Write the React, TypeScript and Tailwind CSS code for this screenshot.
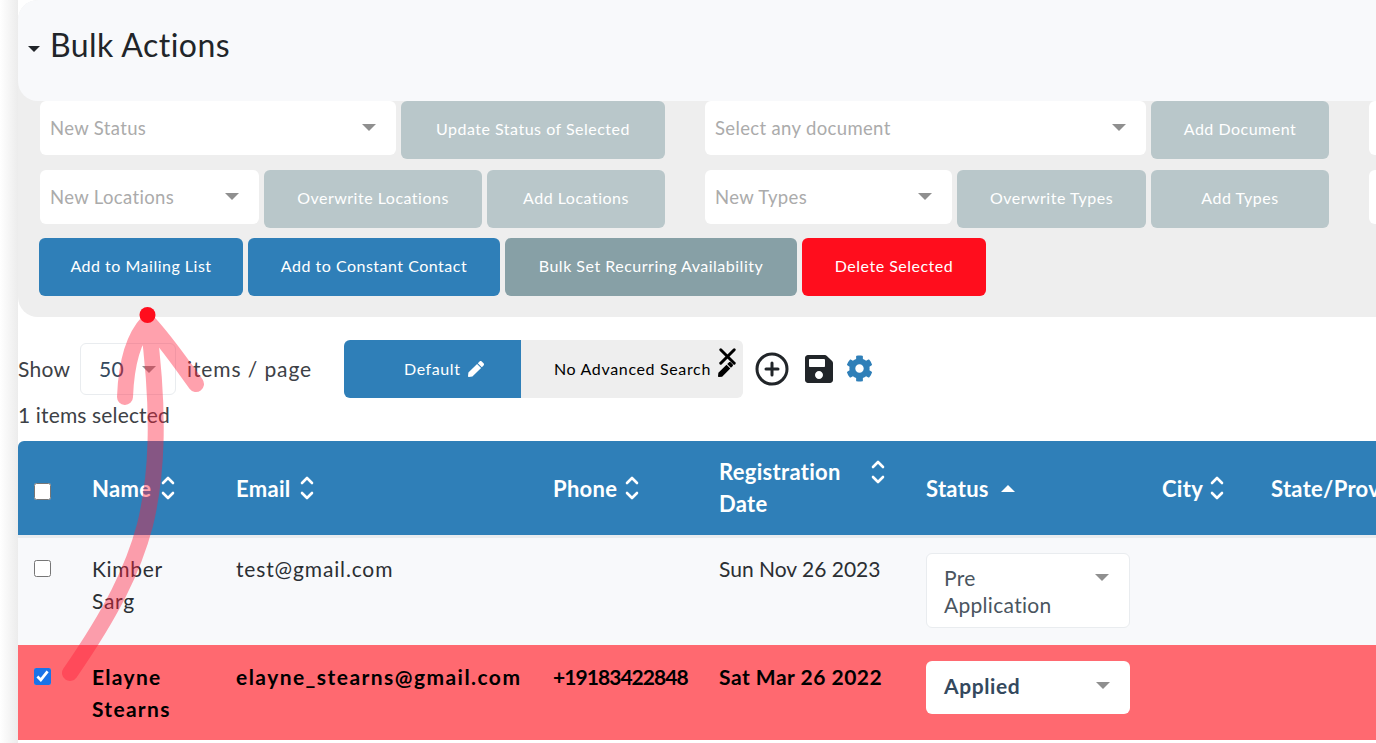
import React from 'react';
import { CirclePlus, X } from 'lucide-react';
import { FaCog, FaPen, FaSave } from 'react-icons/fa';

const Caret = ({ className = 'border-t-[#8f8f8f]' }: { className?: string }) => (
  <span className={`block h-0 w-0 border-x-[7px] border-t-[7px] border-x-transparent ${className}`} />
);

const Sort = () => (
  <svg width="14" height="26" viewBox="0 0 14 26" fill="none" stroke="white" strokeWidth="2.6" strokeLinecap="round" strokeLinejoin="round" className="shrink-0">
    <path d="M2 8l5-5 5 5" />
    <path d="M2 18l5 5 5-5" />
  </svg>
);

const BulkSelect = ({ label, width }: { label: string; width: string }) => (
  <div className={`flex ${width} h-[54px] shrink-0 items-center justify-between rounded-md bg-white pl-[10px] pr-[20px] text-[18.5px] tracking-[0.35px] text-[#ababab]`}>
    <span className="mt-[2px]">{label}</span>
    <Caret className="mb-[2px] border-t-[#8f8f8f]" />
  </div>
);

const Btn = ({ label, width, color }: { label: string; width: string; color: string }) => (
  <div className={`flex h-[58px] ${width} shrink-0 items-center justify-center rounded-md pb-[2px] text-[16px] tracking-[0.5px] text-white ${color}`}>
    {label}
  </div>
);

const OFF = 'bg-[#b9c7ca] text-[#eef2f3]';

const BulkActions = () => (
  <section className="h-[317px] w-[1400px] rounded-bl-[20px] rounded-tl-[20px] bg-[#eeeeee]">
    <div className="flex h-[101px] items-start rounded-bl-[20px] rounded-tl-[20px] bg-[#f8f9fb] pl-[10px] pt-[26px]">
      <span className="mr-[10px] mt-[20px] block h-0 w-0 border-x-[6px] border-t-[6px] border-x-transparent border-t-[#212529]" />
      <h2 className="text-[32px] leading-[38px] tracking-[0.45px] text-[#212529]">Bulk Actions</h2>
    </div>

    <div className="flex pl-[22px]">
      <div className="flex w-[665px] shrink-0 gap-[5px]">
        <BulkSelect label="New Status" width="w-[356px]" />
        <Btn label="Update Status of Selected" width="w-[264px]" color={OFF} />
      </div>
      <div className="flex gap-[5px]">
        <BulkSelect label="Select any document" width="w-[441px]" />
        <Btn label="Add Document" width="w-[178px]" color={OFF} />
        <div className="ml-[35px] h-[54px] w-[40px] rounded-md bg-white" />
      </div>
    </div>

    <div className="mt-[11px] flex pl-[22px]">
      <div className="flex w-[665px] shrink-0 gap-[5px]">
        <BulkSelect label="New Locations" width="w-[219px]" />
        <Btn label="Overwrite Locations" width="w-[218px]" color={OFF} />
        <Btn label="Add Locations" width="w-[178px]" color={OFF} />
      </div>
      <div className="flex gap-[5px]">
        <BulkSelect label="New Types" width="w-[247px]" />
        <Btn label="Overwrite Types" width="w-[189px]" color={OFF} />
        <Btn label="Add Types" width="w-[178px]" color={OFF} />
        <div className="ml-[35px] h-[54px] w-[40px] rounded-md bg-white" />
      </div>
    </div>

    <div className="mt-[10px] flex gap-[5px] pl-[21px]">
      <Btn label="Add to Mailing List" width="w-[204px]" color="bg-[#2f7fb8]" />
      <Btn label="Add to Constant Contact" width="w-[252px]" color="bg-[#2f7fb8]" />
      <Btn label="Bulk Set Recurring Availability" width="w-[292px]" color="bg-[#87a0a6]" />
      <Btn label="Delete Selected" width="w-[184px]" color="bg-[#ff0d1d]" />
    </div>
  </section>
);

const Toolbar = () => (
  <div className="relative mt-[23px] flex h-[58px] items-center text-[21px] tracking-[0.3px] text-[#3d4146]">
    <span className="w-[62px]">Show</span>
    <div className="flex h-[52px] w-[96px] items-center justify-between rounded-md border border-[#e9ecef] pl-[18px] pr-[19px] text-[#34495e]">
      <span>50</span>
      <Caret />
    </div>
    <span className="ml-[11px] w-[157px] tracking-[0.9px]">items / page</span>
    <div className="flex h-[58px] w-[177px] items-center gap-[7px] rounded-l-md bg-[#2f7fb8] pl-[60px] text-[16px] tracking-[0.6px] text-white">
      Default <FaPen size={16} />
    </div>
    <div className="relative flex h-[58px] w-[222px] items-center rounded-r-md bg-[#eeeeee] pl-[33px] text-[16px] tracking-[0.65px] text-black">
      No Advanced Search
      <FaPen size={15} className="absolute left-[197px] top-[22px]" />
      <X size={27} strokeWidth={2.6} className="absolute left-[193px] top-[3px]" />
    </div>
    <CirclePlus size={36} strokeWidth={2} className="-mt-[1px] ml-[11px] text-[#212529]" />
    <FaSave size={32} className="-mt-[1px] ml-[13px] text-[#212529]" />
    <FaCog size={27} className="-mt-[1px] ml-[11px] text-[#2f7fb8]" />
  </div>
);

const COLS = 'grid grid-cols-[74px_144px_317px_166px_207px_236px_109px_300px]';

const Table = () => (
  <div className="w-[1400px]">
    <div className={`${COLS} h-[94px] items-center rounded-tl-md bg-[#2f7fb8] text-[22px] font-bold tracking-[0.3px] text-white`}>
      <div className="pl-[16px] pt-[6px]">
        <input type="checkbox" readOnly className="block h-[17px] w-[17px]" />
      </div>
      <div className="flex items-center gap-[10px]">Name <Sort /></div>
      <div className="flex items-center gap-[9px]">Email <Sort /></div>
      <div className="flex items-center gap-[8px]">Phone <Sort /></div>
      <div className="flex items-start justify-between pr-[41px] leading-[32px]">
        <span>Registration<br />Date</span>
        <span className="mt-[3px]"><Sort /></span>
      </div>
      <div className="flex items-center gap-[12px]">
        Status
        <span className="block h-0 w-0 border-x-[7px] border-b-[7px] border-x-transparent border-b-white" />
      </div>
      <div className="flex items-center gap-[7px]">City <Sort /></div>
      <div className="overflow-hidden whitespace-nowrap">State/Province</div>
    </div>
    <div className="h-[3px] bg-[#e9ecef]" />

    <div className={`${COLS} h-[107px] bg-[#f8f9fb] text-[21px] leading-[32px] tracking-[0.3px] text-[#2b2f33]`}>
      <div className="pl-[16px] pt-[22px]">
        <input type="checkbox" readOnly className="block h-[17px] w-[17px]" />
      </div>
      <div className="pt-[15px] tracking-[0.7px]">Kimber<br />Sarg</div>
      <div className="pt-[15px] tracking-[0.85px]">test@gmail.com</div>
      <div className="pt-[15px]"></div>
      <div className="pt-[15px] tracking-[0px]">Sun Nov 26 2023</div>
      <div className="pt-[15px]">
        <div className="flex h-[75px] w-[204px] items-start justify-between rounded-md border border-[#e9ecef] bg-white pl-[17px] pr-[20px] pt-[10px] text-[#4a5560] leading-[27px]">
          <span>Pre<br />Application</span>
          <Caret className="mt-[10px] border-t-[#8f8f8f]" />
        </div>
      </div>
    </div>

    <div className={`${COLS} h-[95px] bg-[#ff6970] text-[21px] font-bold leading-[32px] tracking-[0.3px] text-black`}>
      <div className="pl-[16px] pt-[23px]">
        <input type="checkbox" checked readOnly className="block h-[17px] w-[17px] accent-[#1a73e8]" />
      </div>
      <div className="pt-[16px] tracking-[1.3px]">Elayne<br />Stearns</div>
      <div className="pt-[16px] tracking-[1.45px]">elayne_stearns@gmail.com</div>
      <div className="pt-[16px] tracking-[-0.95px]">+19183422848</div>
      <div className="pt-[16px] tracking-[0.5px]">Sat Mar 26 2022</div>
      <div className="pt-[16px]">
        <div className="flex h-[53px] w-[204px] items-center justify-between rounded-md bg-white pb-[4px] pl-[18px] pr-[20px] tracking-[0.6px] text-[#34495e]">
          <span>Applied</span>
          <Caret />
        </div>
      </div>
    </div>
  </div>
);

export default function App() {
  return (
    <div className="relative h-[743px] w-[1376px] overflow-hidden bg-white font-[Lato,sans-serif]">
      <div className="absolute inset-y-0 left-0 w-[18px] bg-gradient-to-r from-white to-[#ececec]" />
      <div className="relative pl-[18px]">
        <BulkActions />
        <Toolbar />
        <div className="mt-[5px] h-[38px] text-[21px] leading-[24px] tracking-[0.15px] text-[#3d4146]">1 items selected</div>
        <Table />
      </div>
      {/* annotation arrow drawn on top of the screenshot */}
      <svg className="pointer-events-none absolute left-0 top-0" width="1376" height="743" fill="none">
        <path
          d="M70 673C112 612 133 570 145 525C156 480 161 420 148 322M125 397C126 370 131 340 148 322C165 340 180 362 196 384"
          stroke="#ff1e3c"
          strokeOpacity="0.42"
          strokeWidth="16"
          strokeLinecap="round"
          strokeLinejoin="round"
        />
        <circle cx="147.5" cy="315" r="8" fill="#ff0d1d" />
      </svg>
    </div>
  );
}
